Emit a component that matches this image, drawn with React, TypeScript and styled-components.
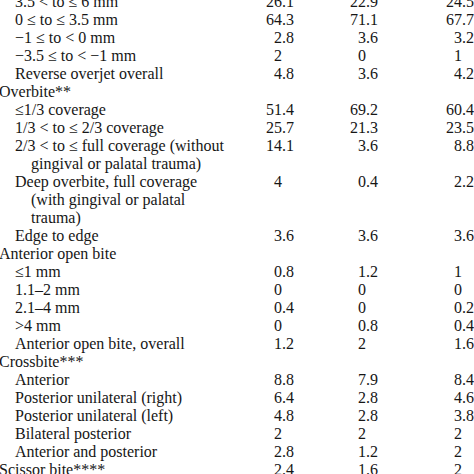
import React from 'react';
import styled, { createGlobalStyle } from 'styled-components';

const GlobalStyle = createGlobalStyle`
  html, body {
    margin: 0;
    padding: 0;
    background: #ffffff;
    overflow: hidden;
  }
`;

type Row = {
  lines: string[];
  indents: number[];
  values?: string[];
};

const sub = (label: string, values: string[]): Row => ({ lines: [label], indents: [1], values });
const head = (label: string, values?: string[]): Row => ({ lines: [label], indents: [0], values });

const rows: Row[] = [
  sub('3.5 < to ≤ 6 mm', ['26.1', '22.9', '24.5']),
  sub('0 ≤ to ≤ 3.5 mm', ['64.3', '71.1', '67.7']),
  sub('−1 ≤ to < 0 mm', ['2.8', '3.6', '3.2']),
  sub('−3.5 ≤ to < −1 mm', ['2', '0', '1']),
  sub('Reverse overjet overall', ['4.8', '3.6', '4.2']),
  head('Overbite**'),
  sub('≤1/3 coverage', ['51.4', '69.2', '60.4']),
  sub('1/3 < to ≤ 2/3 coverage', ['25.7', '21.3', '23.5']),
  {
    lines: ['2/3 < to ≤ full coverage (without', 'gingival or palatal trauma)'],
    indents: [1, 2],
    values: ['14.1', '3.6', '8.8'],
  },
  {
    lines: ['Deep overbite, full coverage', '(with gingival or palatal', 'trauma)'],
    indents: [1, 2, 2],
    values: ['4', '0.4', '2.2'],
  },
  sub('Edge to edge', ['3.6', '3.6', '3.6']),
  head('Anterior open bite'),
  sub('≤1 mm', ['0.8', '1.2', '1']),
  sub('1.1–2 mm', ['0', '0', '0']),
  sub('2.1–4 mm', ['0.4', '0', '0.2']),
  sub('>4 mm', ['0', '0.8', '0.4']),
  sub('Anterior open bite, overall', ['1.2', '2', '1.6']),
  head('Crossbite***'),
  sub('Anterior', ['8.8', '7.9', '8.4']),
  sub('Posterior unilateral (right)', ['6.4', '2.8', '4.6']),
  sub('Posterior unilateral (left)', ['4.8', '2.8', '3.8']),
  sub('Bilateral posterior', ['2', '2', '2']),
  sub('Anterior and posterior', ['2.8', '1.2', '2']),
  head('Scissor bite****', ['2.4', '1.6', '2']),
];

const Table = styled.div`
  display: grid;
  grid-template-columns: 259px 84px 96px 1fr;
  margin-top: -7px;
  margin-left: -1px;
  width: 500px;
  font-family: 'Liberation Serif', 'Times New Roman', serif;
  font-size: 16px;
  line-height: 18px;
  color: #161616;
  white-space: nowrap;
`;

const Label = styled.div`
  display: flex;
  flex-direction: column;
`;

const Line = styled.span<{ $indent: number }>`
  padding-left: ${(p) => p.$indent * 16}px;
`;

const Cell = styled.div`
  display: flex;
  align-items: flex-start;
`;

const IntPart = styled.span`
  display: inline-block;
  width: 24px;
  text-align: right;
`;

export default function App() {
  return (
    <>
      <GlobalStyle />
      <Table>
        {rows.map((row, i) => (
          <React.Fragment key={i}>
            <Label>
              {row.lines.map((line, j) => (
                <Line key={j} $indent={row.indents[j]}>
                  {line}
                </Line>
              ))}
            </Label>
            {[0, 1, 2].map((c) => {
              const v = row.values?.[c];
              const dot = v ? v.indexOf('.') : -1;
              const int = v ? (dot >= 0 ? v.slice(0, dot) : v) : '';
              const frac = v && dot >= 0 ? v.slice(dot) : '';
              return (
                <Cell key={c}>
                  <IntPart>{int}</IntPart>
                  <span>{frac}</span>
                </Cell>
              );
            })}
          </React.Fragment>
        ))}
      </Table>
    </>
  );
}
